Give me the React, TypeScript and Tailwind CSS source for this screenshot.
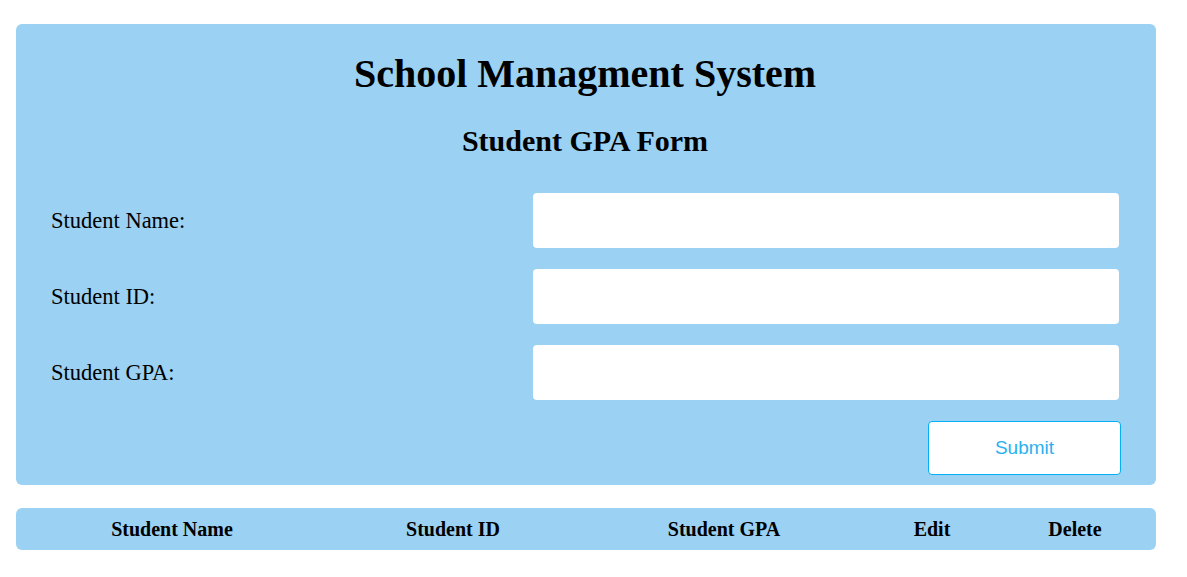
import React from 'react';

const fields = ['Student Name:', 'Student ID:', 'Student GPA:'];
const headers = ['Student Name', 'Student ID', 'Student GPA', 'Edit', 'Delete'];

export default function App() {
    return (
        <div className="min-h-screen bg-white pl-4 pt-6 text-black" style={{ fontFamily: '"Liberation Serif", "Times New Roman", serif' }}>
            <div className="w-[1140px]">
                {/* form card */}
                <div className="rounded-md bg-[#9bd1f3] pl-[35px] pr-[37px] pt-[27px] pb-[10px]">
                    <h1 className="text-center text-[40px] font-bold leading-[46px]">School Managment System</h1>
                    <h2 className="mt-[27px] text-center text-[30px] font-bold leading-[34px]">Student GPA Form</h2>

                    <div className="mt-[35px] flex flex-col gap-[21px]">
                        {fields.map((label) => (
                            <div key={label} className="flex items-center justify-between">
                                <label className="text-[22.5px]">{label}</label>
                                <input className="h-[55px] w-[586px] rounded bg-white outline-none" />
                            </div>
                        ))}
                    </div>

                    <div className="mt-[21px] flex justify-end">
                        <button
                            className="-mr-[2px] h-[54px] w-[193px] rounded border border-[#03b0f5] bg-white text-[19px] text-[#29b1f0]"
                            style={{ fontFamily: '"Liberation Sans", Arial, sans-serif' }}
                        >
                            Submit
                        </button>
                    </div>
                </div>

                {/* table header */}
                <div className="mt-[23px] grid h-[42px] grid-cols-[312px_250px_292px_124px_162px] items-center rounded-md bg-[#9bd1f3] text-[20px] font-bold">
                    {headers.map((h) => (
                        <div key={h} className="text-center">{h}</div>
                    ))}
                </div>
            </div>
        </div>
    );
}
